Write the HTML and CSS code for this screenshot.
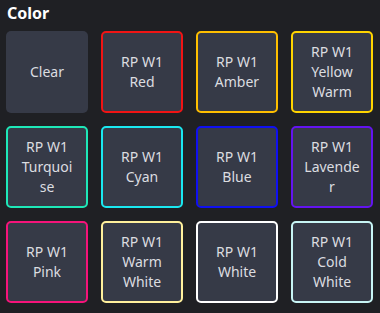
FILE: index.html
```html
<!DOCTYPE html>
<html lang="en">
<head>
    <meta charset="UTF-8">
    <title>Color</title>
    <link rel="stylesheet" href="styles.css">
</head>
<body>
    <div class="panel">
        <h2 class="title">Color</h2>
        <div class="grid">
            <div class="tile">Clear</div>
            <div class="tile red">RP W1<br>Red</div>
            <div class="tile amber">RP W1<br>Amber</div>
            <div class="tile yellow">RP W1<br>Yellow<br>Warm</div>
            <div class="tile turquoise">RP W1<br>Turquoi<br>se</div>
            <div class="tile cyan">RP W1<br>Cyan</div>
            <div class="tile blue">RP W1<br>Blue</div>
            <div class="tile lavender">RP W1<br>Lavende<br>r</div>
            <div class="tile pink">RP W1<br>Pink</div>
            <div class="tile warm">RP W1<br>Warm<br>White</div>
            <div class="tile white">RP W1<br>White</div>
            <div class="tile cold">RP W1<br>Cold<br>White</div>
        </div>
    </div>
</body>
</html>
```
FILE: styles.css
```css
body {
    margin: 0;
    background: #1f2024;
    font-family: "Noto Sans", "Open Sans", sans-serif;
    color: #dcdde0;
}
.panel {
    padding: 2px 6px 0 6px;
}
.title {
    margin: 0 0 7px 1px;
    font-size: 16px;
    font-weight: bold;
    color: #ffffff;
    line-height: 22px;
}
.grid {
    display: grid;
    grid-template-columns: repeat(4, 82px);
    grid-auto-rows: 82px;
    column-gap: 13px;
    row-gap: 13px;
}
.tile {
    box-sizing: border-box;
    background: #363a47;
    border: 2px solid transparent;
    border-radius: 5px;
    display: flex;
    align-items: center;
    justify-content: center;
    text-align: center;
    font-size: 14px;
    line-height: 20px;
}
.red { border-color: #f01414; }
.amber { border-color: #ffbf00; }
.yellow { border-color: #ffd400; }
.turquoise { border-color: #1ee8b8; }
.cyan { border-color: #1ae8f0; }
.blue { border-color: #1010f0; }
.lavender { border-color: #6414f0; }
.pink { border-color: #f5147a; }
.warm { border-color: #fff09c; }
.white { border-color: #ffffff; }
.cold { border-color: #c8f5f5; }
```
